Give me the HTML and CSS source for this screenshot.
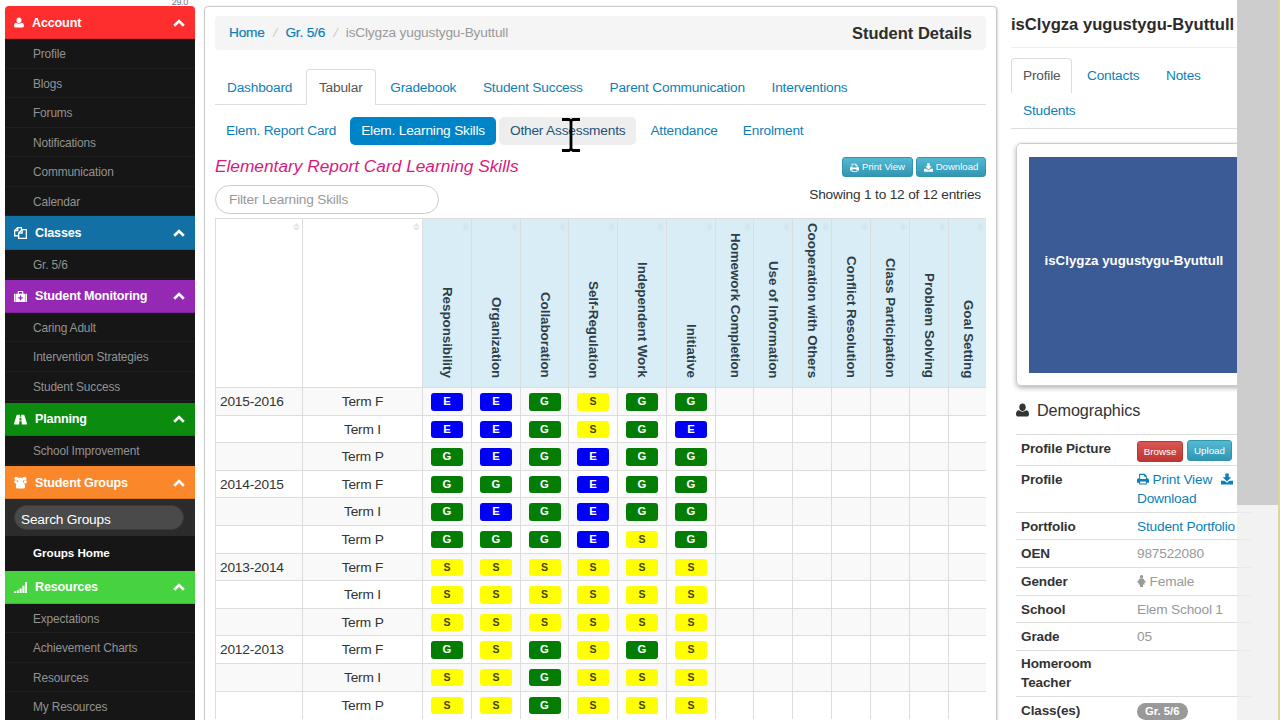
FILE: index.html
```html
<!DOCTYPE html>
<html lang="en">
<head>
<meta charset="utf-8">
<title>Student Details</title>
<link rel="stylesheet" href="styles.css">
</head>
<body>
<svg class="defs" aria-hidden="true">
  <symbol id="user" viewBox="0 0 14 14"><path d="M7 0C9.200 0 10.500 1.700 10.500 4S9.200 8 7 8 3.500 6.300 3.500 4 4.800 0 7 0zM3.400 7.200C5.400 9.300 8.600 9.300 10.600 7.200 13.200 7.300 14 9.200 14 11.500 14 13 13 14 11.500 14H2.500C1 14 0 13 0 11.500 0 9.200.8 7.300 3.400 7.200z"/></symbol>
  <symbol id="copy" viewBox="0 0 14 14"><path fill="none" stroke="currentColor" stroke-width="1.400" d="M5 10.500H.7V5L4 1.700H8V4M4 1.700V5H.7M5 13.300V7.500L8.500 4H13.300V13.300zM8.800 4V7.700H5M8 4.500V1.700"/></symbol>
  <symbol id="medkit" viewBox="0 0 14 14"><path fill-rule="evenodd" d="M0 4h1.700v9H1Q0 13 0 12zM12.300 4H14v8q0 1-1 1h-.7zM2.200 4H4V1.500Q4 1 4.500 1h5q.5 0 .5.500V4h1.800v9H2.200zM5.200 2.200V4h3.600V2.200zM6.300 6v1.800H4.500v1.400h1.800V11h1.400V9.200h1.800V7.800H7.700V6z"/></symbol>
  <symbol id="road" viewBox="0 0 14 14"><path fill-rule="evenodd" d="M3 2H6.400L6.200 4H7.800L7.600 2H11L14 11.400Q14.200 12.500 13 12.500H8.500L8.200 9H5.800L5.500 12.500H1Q-.2 12.500 0 11.400zM6.100 5 5.900 8H8.100L7.900 5z"/></symbol>
  <symbol id="group" viewBox="0 0 14 14"><circle cx="2.700" cy="3" r="2.200"/><circle cx="11.300" cy="3" r="2.200"/><circle cx="7" cy="4.500" r="2.800"/><path d="M0 5Q3 4 4 7L3 9Q0 8 0 5zM14 5Q11 4 10 7L11 9Q14 8 14 5zM4 6.500H10Q12 8 12 11.500 12 13.500 10 13.500H4Q2 13.500 2 11.500 2 8 4 6.500z"/></symbol>
  <symbol id="signal" viewBox="0 0 14 14"><path d="M0 11h2.300v2H0zM3 10h2.300v3H3zM6 8h2.300v5H6zM9 5h2.300v8H9zM11.800 1H14v12h-2.200z"/></symbol>
  <symbol id="up" viewBox="0 0 12 8"><path fill="none" stroke="currentColor" stroke-width="2.700" d="M1.200 6.800 6 2.100 10.800 6.800"/></symbol>
  <symbol id="print" viewBox="0 0 14 14"><path fill-rule="evenodd" d="M2.500 1H9L11.500 3.500V6H12Q14 6 14 8V11.500H11.500V13.500H2.500V11.500H0V8Q0 6 2 6H2.500zM3.700 2.200V7H10.300V4.300H8.300V2.200zM3.700 9.800V12.300H10.300V9.800z"/></symbol>
  <symbol id="down" viewBox="0 0 14 14"><path d="M5 0.500H9V5H12L7 10 2 5H5zM0 9H4L7 11.500 10 9H14V13.500H0z"/></symbol>
  <symbol id="female" viewBox="0 0 10 14"><circle cx="5" cy="2" r="2"/><path d="M3 4H7L10 8.200 9 9.500 7.500 8 8.800 11H6.800V14H3.200V11H1.200L2.500 8 1 9.500 0 8.200z"/></symbol>
</svg>
<div class="app">
  <nav class="sidebar">
    <div class="version">29.0</div>
    <h3 class="head red"><svg><use href="#user"/></svg><span>Account</span><svg class="chev"><use href="#up"/></svg></h3>
    <ul class="list"><li>Profile</li><li>Blogs</li><li>Forums</li><li>Notifications</li><li>Communication</li><li>Calendar</li></ul>
    <h3 class="head blue"><svg><use href="#copy"/></svg><span>Classes</span><svg class="chev"><use href="#up"/></svg></h3>
    <ul class="list one"><li>Gr. 5/6</li></ul>
    <h3 class="head purple"><svg><use href="#medkit"/></svg><span>Student Monitoring</span><svg class="chev"><use href="#up"/></svg></h3>
    <ul class="list three"><li>Caring Adult</li><li>Intervention Strategies</li><li>Student Success</li></ul>
    <h3 class="head green"><svg><use href="#road"/></svg><span>Planning</span><svg class="chev"><use href="#up"/></svg></h3>
    <ul class="list one"><li>School Improvement</li></ul>
    <h3 class="head orange"><svg><use href="#group"/></svg><span>Student Groups</span><svg class="chev"><use href="#up"/></svg></h3>
    <div class="search"><div class="search-box">Search Groups</div></div>
    <div class="groups-home">Groups Home</div>
    <h3 class="head lime"><svg><use href="#signal"/></svg><span>Resources</span><svg class="chev"><use href="#up"/></svg></h3>
    <ul class="list"><li>Expectations</li><li>Achievement Charts</li><li>Resources</li><li>My Resources</li></ul>
  </nav>

  <main class="main">
    <div class="crumbs"><a>Home</a><i>/</i><a>Gr. 5/6</a><i>/</i><span>isClygza yugustygu-Byuttull</span><h1>Student Details</h1></div>
    <div class="tabs"><a>Dashboard</a><a class="active">Tabular</a><a>Gradebook</a><a>Student Success</a><a>Parent Communication</a><a>Interventions</a></div>
    <div class="pills"><a>Elem. Report Card</a><a class="active">Elem. Learning Skills</a><a class="hover">Other Assessments</a><a>Attendance</a><a>Enrolment</a></div>
    <div class="title-row"><h2>Elementary Report Card Learning Skills</h2><a class="btn"><svg><use href="#print"/></svg>Print View</a><a class="btn"><svg><use href="#down"/></svg>Download</a></div>
    <div class="filter-row"><div class="filter">Filter Learning Skills</div><span>Showing 1 to 12 of 12 entries</span></div>
    <div class="grid">
      <div class="row header"><div></div><div></div><div><span>Responsibility</span></div><div><span>Organization</span></div><div><span>Collaboration</span></div><div><span>Self-Regulation</span></div><div><span>Independent Work</span></div><div><span>Initiative</span></div><div><span>Homework Completion</span></div><div><span>Use of Information</span></div><div><span>Cooperation with Others</span></div><div><span>Conflict Resolution</span></div><div><span>Class Participation</span></div><div><span>Problem Solving</span></div><div><span>Goal Setting</span></div></div>
      <div class="row"><div>2015-2016</div><div>Term F</div><div><b class="e">E</b></div><div><b class="e">E</b></div><div><b class="g">G</b></div><div><b class="s">S</b></div><div><b class="g">G</b></div><div><b class="g">G</b></div><div></div><div></div><div></div><div></div><div></div><div></div><div></div></div>
      <div class="row"><div></div><div>Term I</div><div><b class="e">E</b></div><div><b class="e">E</b></div><div><b class="g">G</b></div><div><b class="s">S</b></div><div><b class="g">G</b></div><div><b class="e">E</b></div><div></div><div></div><div></div><div></div><div></div><div></div><div></div></div>
      <div class="row"><div></div><div>Term P</div><div><b class="g">G</b></div><div><b class="e">E</b></div><div><b class="g">G</b></div><div><b class="e">E</b></div><div><b class="g">G</b></div><div><b class="g">G</b></div><div></div><div></div><div></div><div></div><div></div><div></div><div></div></div>
      <div class="row"><div>2014-2015</div><div>Term F</div><div><b class="g">G</b></div><div><b class="g">G</b></div><div><b class="g">G</b></div><div><b class="e">E</b></div><div><b class="g">G</b></div><div><b class="g">G</b></div><div></div><div></div><div></div><div></div><div></div><div></div><div></div></div>
      <div class="row"><div></div><div>Term I</div><div><b class="g">G</b></div><div><b class="e">E</b></div><div><b class="g">G</b></div><div><b class="e">E</b></div><div><b class="g">G</b></div><div><b class="g">G</b></div><div></div><div></div><div></div><div></div><div></div><div></div><div></div></div>
      <div class="row"><div></div><div>Term P</div><div><b class="g">G</b></div><div><b class="g">G</b></div><div><b class="g">G</b></div><div><b class="e">E</b></div><div><b class="s">S</b></div><div><b class="g">G</b></div><div></div><div></div><div></div><div></div><div></div><div></div><div></div></div>
      <div class="row"><div>2013-2014</div><div>Term F</div><div><b class="s">S</b></div><div><b class="s">S</b></div><div><b class="s">S</b></div><div><b class="s">S</b></div><div><b class="s">S</b></div><div><b class="s">S</b></div><div></div><div></div><div></div><div></div><div></div><div></div><div></div></div>
      <div class="row"><div></div><div>Term I</div><div><b class="s">S</b></div><div><b class="s">S</b></div><div><b class="s">S</b></div><div><b class="s">S</b></div><div><b class="s">S</b></div><div><b class="s">S</b></div><div></div><div></div><div></div><div></div><div></div><div></div><div></div></div>
      <div class="row"><div></div><div>Term P</div><div><b class="s">S</b></div><div><b class="s">S</b></div><div><b class="s">S</b></div><div><b class="s">S</b></div><div><b class="s">S</b></div><div><b class="s">S</b></div><div></div><div></div><div></div><div></div><div></div><div></div><div></div></div>
      <div class="row"><div>2012-2013</div><div>Term F</div><div><b class="g">G</b></div><div><b class="s">S</b></div><div><b class="g">G</b></div><div><b class="s">S</b></div><div><b class="g">G</b></div><div><b class="s">S</b></div><div></div><div></div><div></div><div></div><div></div><div></div><div></div></div>
      <div class="row"><div></div><div>Term I</div><div><b class="s">S</b></div><div><b class="s">S</b></div><div><b class="g">G</b></div><div><b class="s">S</b></div><div><b class="s">S</b></div><div><b class="s">S</b></div><div></div><div></div><div></div><div></div><div></div><div></div><div></div></div>
      <div class="row"><div></div><div>Term P</div><div><b class="s">S</b></div><div><b class="s">S</b></div><div><b class="g">G</b></div><div><b class="s">S</b></div><div><b class="s">S</b></div><div><b class="s">S</b></div><div></div><div></div><div></div><div></div><div></div><div></div><div></div></div>
    </div>
  </main>

  <aside class="aside">
    <h2 class="student">isClygza yugustygu-Byuttull</h2>
    <div class="side-tabs"><a class="active">Profile</a><a>Contacts</a><a>Notes</a><a>Students</a></div>
    <div class="photo"><div>isClygza yugustygu-Byuttull</div></div>
    <h3 class="demo"><svg><use href="#user"/></svg>Demographics</h3>
    <dl class="facts">
      <div class="r1"><dt>Profile Picture</dt><dd><a class="btn danger">Browse</a><a class="btn upload">Upload</a></dd></div>
      <div class="r2"><dt>Profile</dt><dd class="link"><svg><use href="#print"/></svg> Print View <svg class="dl"><use href="#down"/></svg><br>Download</dd></div>
      <div><dt>Portfolio</dt><dd class="link">Student Portfolio</dd></div>
      <div><dt>OEN</dt><dd>987522080</dd></div>
      <div><dt>Gender</dt><dd><svg class="fem"><use href="#female"/></svg> Female</dd></div>
      <div><dt>School</dt><dd>Elem School 1</dd></div>
      <div><dt>Grade</dt><dd>05</dd></div>
      <div class="r3"><dt>Homeroom Teacher</dt><dd></dd></div>
      <div><dt>Class(es)</dt><dd><span class="badge">Gr. 5/6</span></dd></div>
    </dl>
  </aside>
</div>
<div class="scroll"><div class="thumb"></div></div>
<svg class="cursor" viewBox="0 0 20 36"><path fill="none" stroke="#000" stroke-width="2.800" d="M1 2.500H8L10 4 12 2.500H19M10 3V32M1 33.500H8L10 32 12 33.500H19"/></svg>
</body>
</html>
```
FILE: styles.css
```css
* { box-sizing: border-box; }
body { margin: 0; width: 1280px; height: 720px; overflow: hidden; position: relative; background: #fff; font: 13.700px/19px "Liberation Sans", Arial, sans-serif; letter-spacing: -.19px; color: #333; }
h1, h2, h3, ul, dl, dd { margin: 0; padding: 0; }
svg { fill: currentColor; flex: none; }
a { color: #0d7fb8; }
.defs { position: absolute; width: 0; height: 0; }
.app { display: flex; height: 720px; overflow: hidden; }

.sidebar { width: 190px; margin-left: 5px; flex: none; }
.version { height: 6px; line-height: 5px; font-size: 9px; letter-spacing: -.3px; text-align: right; padding-right: 7px; color: #777; }
.head { display: flex; align-items: center; height: 33px; padding: 1px 10px 0 9px; color: #fff; font-size: 12.600px; line-height: 32px; letter-spacing: -.17px; border-bottom: 1px solid rgba(0,0,0,.12); }
.head svg { width: 13px; height: 13px; margin-right: 8px; }
.head span { flex: 1; }
.head .chev { width: 12px; height: 8px; margin: 0; }
.red { background: #ff2e2e; border-radius: 4px 4px 0 0; }
.red svg { width: 10px; height: 11px; margin-right: 8px; }
.blue { background: #1270a5; height: 33.500px; }
.purple { background: #9629b4; }
.green { background: #0b8c0e; }
.orange { background: #fa8729; }
.lime { background: #46d33f; }
.list { list-style: none; background: #161616; }
.list li { height: 29.500px; line-height: 30px; padding-left: 28px; font-size: 11.900px; letter-spacing: -.15px; color: #929292; border-bottom: 1px solid #1f1f1f; }
.one { height: 30.300px; }
.three { height: 90px; }
.search { height: 37px; background: #2b2b2b; padding: 6px 11px 0 9px; }
.search-box { height: 25px; border-radius: 13px; background: #4a4a4a; border: 1px solid #3b3b3b; color: #fff; line-height: 27px; padding-left: 6px; }
.groups-home { height: 34.500px; line-height: 34px; background: #161616; color: #fff; font-weight: bold; font-size: 11.700px; letter-spacing: -.05px; padding-left: 28px; }

.main { width: 793px; margin: 6px 0 0 9px; flex: none; height: 760px; border: 1px solid #c8c8c8; border-radius: 4px; padding: 9px 10px 0; box-shadow: 1px 0 2px rgba(0,0,0,.15); }
.crumbs { display: flex; align-items: center; height: 34px; background: #f5f5f5; border-radius: 4px; padding: 0 14px 1px; }
.crumbs a { -webkit-text-stroke: .2px; }
.crumbs i { color: #ccc; margin: 0 8.500px; }
.crumbs span { color: #999; }
.crumbs h1 { margin-left: auto; padding-top: 1px; font-size: 16.500px; letter-spacing: 0; color: #2d2d2d; }
.tabs { display: flex; margin-top: 19px; height: 36px; border-bottom: 1px solid #ddd; }
.tabs a { padding: 0 12px; margin-right: 2.700px; line-height: 37px; height: 36px; }
.tabs .active { margin-left: -1px; color: #555; border: 1px solid #ddd; border-bottom: 0; border-radius: 4px 4px 0 0; background: #fff; line-height: 35px; }
.pills { display: flex; margin-top: 12px; height: 28px; gap: 3px; }
.pills a { padding: 0 11px; line-height: 27px; border-radius: 5px; }
.pills .active { background: #0084c8; color: #fff; }
.pills .hover { background: #eee; color: #1d5479; }
.title-row { display: flex; align-items: center; height: 40px; padding-top: 4px; }
.title-row h2 { flex: 1; font-size: 17.300px; letter-spacing: 0; font-style: italic; font-weight: normal; color: #d81b7d; padding-bottom: 1px; }
.btn { display: inline-flex; align-items: center; justify-content: center; height: 20px; width: 71px; border-radius: 3px; background: linear-gradient(#55b9d4, #3096b1); border: 1px solid #3494ad; color: #fff; font-size: 9.600px; letter-spacing: 0; line-height: 18px; }
.btn + .btn { margin-left: 3px; width: 70px; }
.btn svg { width: 9px; height: 9px; margin-right: 3px; }
.filter-row { display: flex; justify-content: space-between; height: 33px; padding-right: 5px; }
.filter { width: 224px; height: 29px; border: 1px solid #ccc; border-radius: 15px; padding-left: 13px; line-height: 27px; color: #999; }
.grid { width: 771px; }
.row { display: grid; grid-template-columns: 87px 120px 49px 49px 48px 49px 49px 49px 38px 39px 39px 39px 39px 39px 38px; height: 27.600px; }
.row > div { border-left: 1px solid #ddd; border-top: 1px solid #ddd; text-align: center; line-height: 27.500px; }
.row:nth-child(even) > div { background: #f9f9f9; }
.row > div:first-child { text-align: left; padding-left: 4px; }
.row b { display: block; width: 32px; height: 17.500px; margin: 5px auto 0; border-radius: 3px; color: #fff; font-size: 11.300px; letter-spacing: 0; line-height: 17px; }
.row .e { background: #0000f6; }
.row .g { background: #047d04; }
.row .s { background: #ff0; color: #444400; font-size: 10.500px; }
.header { height: 169px; }
.header > div { display: flex; justify-content: center; align-items: flex-end; padding-bottom: 9px; background: #d9edf7; position: relative; }
.header > div:nth-child(-n+2) { background: #fff; }
.header > div::after { content: ""; position: absolute; right: 2px; top: 4px; width: 7px; height: 8px; background: #aaa; opacity: .3; clip-path: polygon(50% 0, 100% 43%, 0 43%, 0 57%, 100% 57%, 50% 100%, 0 57%, 0 43%); }
.header > div:nth-child(n+3)::after { opacity: .1; }
.header span { writing-mode: vertical-rl; font-weight: bold; line-height: 18px; font-size: 13.400px; letter-spacing: -.05px; white-space: nowrap; color: #2e3f49; }

.aside { width: 240px; margin-left: 14px; flex: none; }
.student { height: 48px; line-height: 49px; font-size: 16.600px; letter-spacing: 0; white-space: nowrap; border-bottom: 1px solid #eee; color: #2b2b2b; }
.side-tabs { display: flex; flex-wrap: wrap; width: 240px; margin-top: 10px; height: 71px; border-bottom: 1px solid #ddd; }
.side-tabs a { height: 35px; line-height: 35px; padding: 0 12px; margin-right: 2.500px; }
.side-tabs .active { line-height: 34px; color: #555; border: 1px solid #ddd; border-bottom: 0; border-radius: 4px 4px 0 0; padding: 0 11px; }
.photo { margin: 14px 0 0 5px; width: 260px; height: 243px; border: 1px solid #ccc; border-radius: 5px; padding: 13px 12px; box-shadow: 0 2px 5px rgba(0,0,0,.3); }
.photo div { height: 216px; line-height: 207px; background: #3a5b95; color: #fff; font-weight: bold; font-size: 13.300px; letter-spacing: 0; padding-left: 15.500px; white-space: nowrap; }
.demo { display: flex; align-items: center; margin: 14px 0 0 5px; height: 20px; font-size: 16.200px; letter-spacing: -.1px; font-weight: normal; }
.demo svg { width: 13px; height: 14px; margin-right: 8px; }
.facts { margin: 14px 0 0 5px; width: 235px; }
.facts > div { display: flex; height: 27.700px; border-top: 1px solid #ddd; padding: 4px 0 0 5px; }
.facts dt { width: 116px; padding-right: 20px; font-weight: bold; font-size: 13.500px; letter-spacing: -.1px; flex: none; }
.facts dd { color: #999; white-space: nowrap; }
.facts .link { color: #0d7fb8; }
.facts dd svg { width: 12px; height: 12px; vertical-align: -1px; }
.facts .dl { margin-left: 5px; }
.facts dd .fem { width: 9px; }
.facts .r1 { height: 31px; }
.facts .r2 { height: 46.500px; }
.facts .r3 { height: 46px; padding-top: 3.500px; }
.facts .btn { width: 45px; height: 21px; margin-left: 4px; font-size: 9.800px; vertical-align: top; margin-top: 1px; }
.facts .danger { width: 46px; margin-left: 0; margin-top: 2px; background: linear-gradient(#dc5651, #bd3630); border-color: #b13a35; }
.badge { display: inline-block; background: #999; color: #fff; font-weight: bold; font-size: 11.300px; letter-spacing: 0; height: 17px; line-height: 17px; border-radius: 9px; padding: 0 8px; vertical-align: top; margin-top: 2px; }

.scroll { position: absolute; left: 1237px; top: 0; width: 43px; height: 720px; background: rgba(238,238,238,.75); border-right: 2px solid #dfd69c; }
.thumb { height: 505px; background: #cdcdcd; }
.cursor { position: absolute; left: 561px; top: 117px; width: 20px; height: 36px; }
```
